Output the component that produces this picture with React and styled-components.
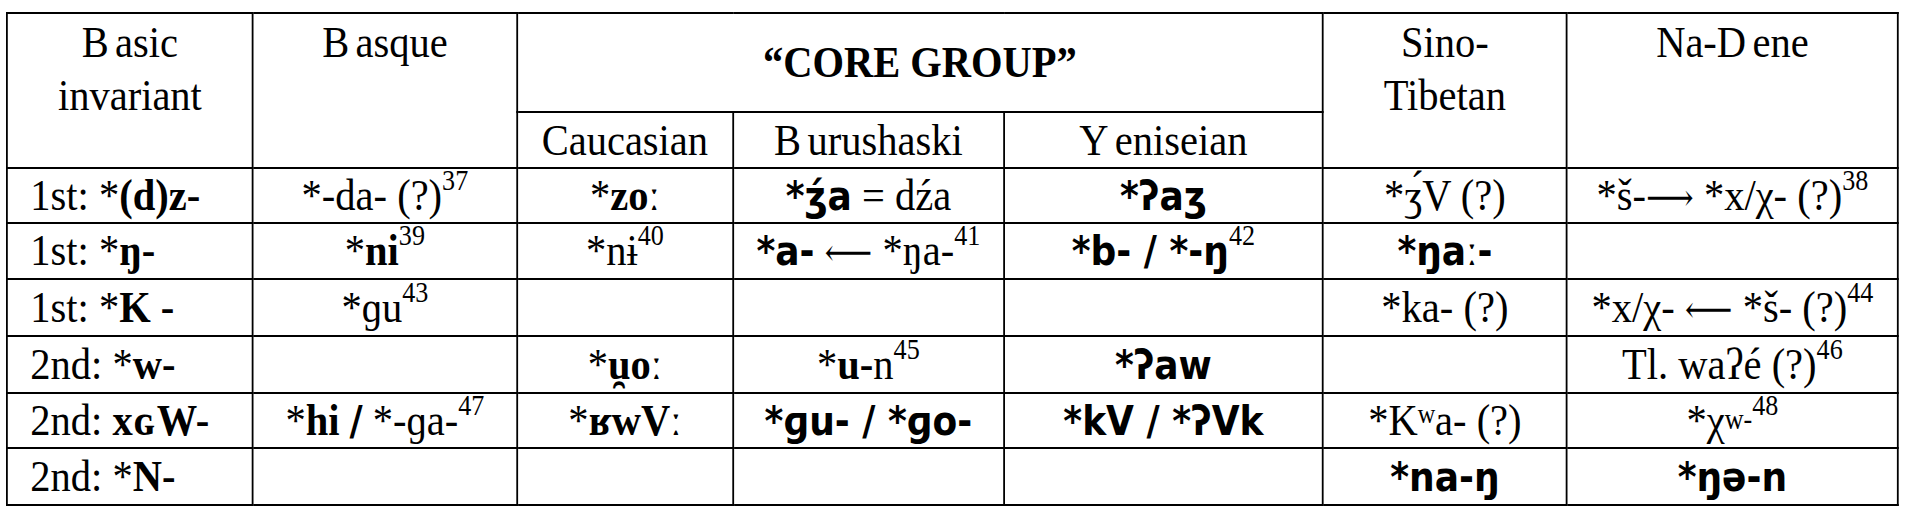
import React from 'react';
import styled, { createGlobalStyle } from 'styled-components';

const GlobalStyle = createGlobalStyle`
  html, body {
    margin: 0;
    background: #fff;
    overflow: hidden;
  }
  body {
    padding: 12px 0 0 6px;
  }
`;

// the source renders a tall, slightly condensed serif: lay the table out wide, then squeeze it
const SQUEEZE = 0.9;

const Table = styled.table`
  border-collapse: collapse;
  table-layout: fixed;
  width: ${1891 / SQUEEZE}px;
  transform: scaleX(${SQUEEZE});
  transform-origin: 0 0;
  font-family: 'Liberation Serif', 'DejaVu Serif', serif;
  font-size: 45px;
  color: #000;
`;

const Row = styled.tr`
  height: ${p => p.$h}px;
`;

const Head = styled.th`
  border: 2px solid #000;
  font-weight: ${p => (p.$bold ? 700 : 400)};
  text-align: center;
  vertical-align: ${p => (p.$top ? 'top' : 'middle')};
  padding: ${p => (p.$top ? '2px 4px 0' : '0 4px')};
  line-height: 53px;
  white-space: nowrap;
`;

const Cell = styled.td`
  border: 2px solid #000;
  text-align: ${p => (p.$left ? 'left' : 'center')};
  vertical-align: middle;
  padding: ${p => (p.$left ? '0 0 0 25px' : '0 4px')};
  line-height: 1.15;
  white-space: nowrap;
`;

const B = styled.b`
  font-weight: 700;
`;

const S = styled.span`
  font-family: 'DejaVu Sans', sans-serif;
  font-size: 40px;
  font-weight: 700;
`;

const Arrow = styled.span`
  font-family: 'DejaVu Serif', serif;
  font-size: 37px;
`;

const Sup = styled.span`
  font-size: 29px;
  vertical-align: ${p => p.$raise || 20}px;
  line-height: 0;
`;

const Kern = styled.span`
  margin-right: ${p => p.$w || 7}px;
`;

const cols = [246, 264, 216, 271, 319, 244, 331].map(w => w / SQUEEZE);

export default function App() {
  return (
    <>
      <GlobalStyle />
      <Table>
        <colgroup>
          {cols.map((w, i) => (
            <col key={i} style={{ width: w }} />
          ))}
        </colgroup>
        <thead>
          <Row $h={99}>
            <Head rowSpan={2} $top>
              <Kern>B</Kern>asic
              <br />
              invariant
            </Head>
            <Head rowSpan={2} $top>
              <Kern>B</Kern>asque
            </Head>
            <Head colSpan={3} $bold>
              “CORE GROUP”
            </Head>
            <Head rowSpan={2} $top>
              Sino-
              <br />
              Tibetan
            </Head>
            <Head rowSpan={2} $top>
              Na-<Kern>D</Kern>ene
            </Head>
          </Row>
          <Row $h={56}>
            <Head>Caucasian</Head>
            <Head>
              <Kern>B</Kern>urushaski
            </Head>
            <Head>
              <Kern>Y</Kern>eniseian
            </Head>
          </Row>
        </thead>
        <tbody>
          <Row $h={55}>
            <Cell $left>
              1st: *<B>(d)z-</B>
            </Cell>
            <Cell>
              *-da- (?)<Sup>37</Sup>
            </Cell>
            <Cell>
              *<B>zo</B>ː
            </Cell>
            <Cell>
              <S>*ʒ́a</S> = dźa
            </Cell>
            <Cell>
              <S>*ʔaʒ</S>
            </Cell>
            <Cell>*ʒ́V (?)</Cell>
            <Cell>
              *š-<Arrow>⟶</Arrow> *x/χ- (?)<Sup>38</Sup>
            </Cell>
          </Row>
          <Row $h={56}>
            <Cell $left>
              1st: *<B>ŋ-</B>
            </Cell>
            <Cell>
              *<B>ni</B>
              <Sup>39</Sup>
            </Cell>
            <Cell>
              *nɨ<Sup>40</Sup>
            </Cell>
            <Cell>
              <S>*a-</S> <Arrow>⟵</Arrow> *ŋa-<Sup>41</Sup>
            </Cell>
            <Cell>
              <S>*b- / *-ŋ</S>
              <Sup>42</Sup>
            </Cell>
            <Cell>
              <S>*ŋa</S>ː<S>-</S>
            </Cell>
            <Cell />
          </Row>
          <Row $h={57}>
            <Cell $left>
              1st: *<B>K -</B>
            </Cell>
            <Cell>
              *ɡu<Sup>43</Sup>
            </Cell>
            <Cell />
            <Cell />
            <Cell />
            <Cell>*ka- (?)</Cell>
            <Cell>
              *x/χ- <Arrow>⟵</Arrow> *š- (?)<Sup>44</Sup>
            </Cell>
          </Row>
          <Row $h={57}>
            <Cell $left>
              2nd: *<B>w-</B>
            </Cell>
            <Cell />
            <Cell>
              *<B>u̯o</B>ː
            </Cell>
            <Cell>
              *<B>u-</B>n<Sup>45</Sup>
            </Cell>
            <Cell>
              <S>*ʔaw</S>
            </Cell>
            <Cell />
            <Cell>
              Tl. waʔé (?)<Sup>46</Sup>
            </Cell>
          </Row>
          <Row $h={55}>
            <Cell $left>
              2nd: <B>xɢW-</B>
            </Cell>
            <Cell>
              *<B>hi</B> <S>/</S> *-ɡa-<Sup>47</Sup>
            </Cell>
            <Cell>
              *<B>ʁwV</B>ː
            </Cell>
            <Cell>
              <S>*ɡu- / *ɡo-</S>
            </Cell>
            <Cell>
              <S>*kV / *ʔVk</S>
            </Cell>
            <Cell>*Kʷa- (?)</Cell>
            <Cell>
              *χ<Sup $raise={6}>w-</Sup>
              <Sup>48</Sup>
            </Cell>
          </Row>
          <Row $h={57}>
            <Cell $left>
              2nd: *<B>N-</B>
            </Cell>
            <Cell />
            <Cell />
            <Cell />
            <Cell />
            <Cell>
              <S>*na-ŋ</S>
            </Cell>
            <Cell>
              <S>*ŋə-n</S>
            </Cell>
          </Row>
        </tbody>
      </Table>
    </>
  );
}
